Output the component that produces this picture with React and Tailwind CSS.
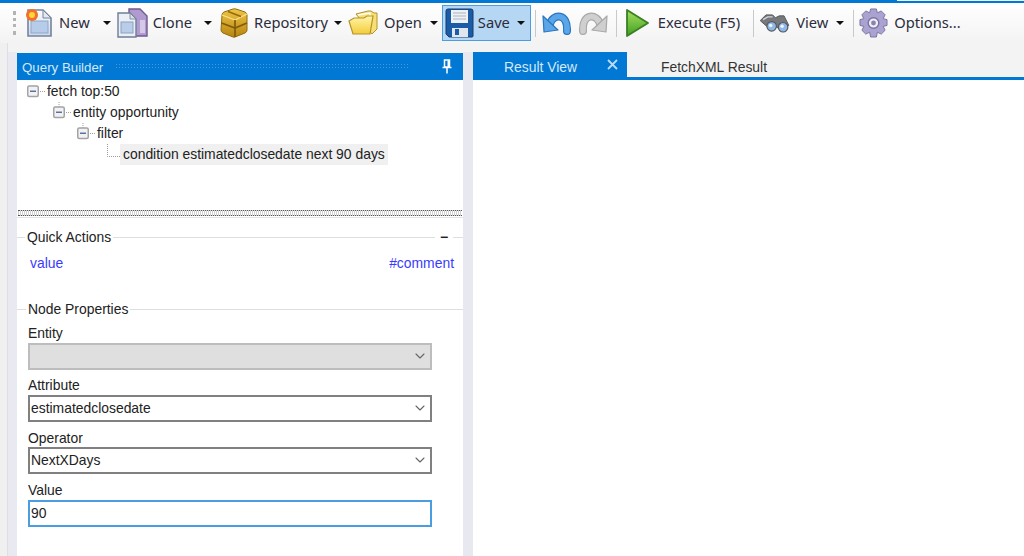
import { ChevronDown } from "lucide-react";

const IconNew = () => (
  <svg width="28" height="30" viewBox="0 0 28 30">
    <defs>
      <linearGradient id="newPage" x1="0" y1="0" x2="0" y2="1">
        <stop offset="0" stopColor="#fbfcfe" />
        <stop offset="1" stopColor="#cbd9ec" />
      </linearGradient>
    </defs>
    <path d="M3 2h15l8 8v18H3z" fill="url(#newPage)" stroke="#75849a" strokeWidth="1.6" />
    <path d="M18 2v8h8z" fill="#e4e9f0" stroke="#75849a" strokeWidth="1" />
    <rect x="6" y="13" width="17" height="12" fill="#b6cce9" stroke="#8ea6c8" strokeWidth="1" />
    <circle cx="7" cy="7" r="6" fill="#f2702a" />
    <circle cx="7" cy="7" r="3" fill="#ffd53c" />
  </svg>
);

const IconClone = () => (
  <svg width="31" height="30" viewBox="0 0 31 30">
    <path d="M12 1h11l7 7v20H12z" fill="#b09ad0" stroke="#6f5b8c" strokeWidth="1.4" />
    <rect x="23" y="12" width="5" height="13" fill="#d5c8e8" />
    <path d="M1 5h12l6 6v18H1z" fill="#eaeff6" stroke="#6f7d96" strokeWidth="1.4" />
    <path d="M13 5v6h6z" fill="#d8dee7" stroke="#6f7d96" strokeWidth="0.8" />
    <rect x="4" y="14" width="12" height="11" fill="#b9cde8" stroke="#8ba1c1" strokeWidth="1" />
  </svg>
);

const IconBox = () => (
  <svg width="28" height="30" viewBox="0 0 28 30">
    <defs>
      <linearGradient id="boxSide" x1="0" y1="0" x2="0" y2="1">
        <stop offset="0" stopColor="#f0c445" />
        <stop offset="1" stopColor="#b8850f" />
      </linearGradient>
    </defs>
    <path d="M2 7Q2 5 4 4L13 1Q14 .6 16 1L25 4Q27 5 27 7L27 22Q27 24 25 25L15 29Q14 29.4 13 29L3 25Q1 24 1 22z" fill="url(#boxSide)" stroke="#8f6c0e" strokeWidth="1" />
    <path d="M2 7l13 5 12-6" fill="none" stroke="#f9e08e" strokeWidth="1.3" />
    <path d="M15 12v17" stroke="#7d5d0c" strokeWidth="1.7" />
    <path d="M1.5 15l13.5 5 12-5" fill="none" stroke="#7d5d0c" strokeWidth="1.7" />
    <path d="M8 3.5l13 5" fill="none" stroke="#8f6c0e" strokeWidth="1.5" />
  </svg>
);

const IconFolder = () => (
  <svg width="30" height="26" viewBox="0 0 30 26">
    <defs>
      <linearGradient id="folderFill" x1="0" y1="0" x2="0" y2="1">
        <stop offset="0" stopColor="#fff5a8" />
        <stop offset="1" stopColor="#f4cc3c" />
      </linearGradient>
    </defs>
    <path d="M8 4 20 1h3l3 2h3v16l-5 5z" fill="#f7df74" stroke="#b5932c" strokeWidth="1" />
    <path d="M10 5l12-2v10" fill="none" stroke="#fff" strokeWidth="1.4" />
    <path d="M1 11l5-3h10l3-2h6l-3 18H5z" fill="url(#folderFill)" stroke="#b5932c" strokeWidth="1.2" />
  </svg>
);

const IconSave = () => (
  <svg width="29" height="30" viewBox="0 0 29 30">
    <path d="M1 3a2 2 0 0 1 2-2h23a2 2 0 0 1 2 2v25a1 1 0 0 1-1 1H4l-3-3z" fill="#1c5ba6" stroke="#123c75" strokeWidth="1" />
    <rect x="6" y="2" width="17" height="13" fill="#eef1f4" />
    <path d="M8 5h13M8 8h13M8 11h13" stroke="#a9b4c1" strokeWidth="1" />
    <rect x="7" y="20" width="16" height="9" fill="#dfe6ee" />
    <rect x="10" y="21" width="4" height="6" fill="#1c5ba6" />
  </svg>
);

const IconArrow = ({ flip, fill, stroke }) => (
  <svg width="30" height="24" viewBox="0 0 30 24" className={flip ? "-scale-x-100" : ""}>
    <path d="M8 13C11 2 26 2 25 20" fill="none" stroke={stroke} strokeWidth="8" strokeLinecap="round" />
    <path d="M8 13C11 2 26 2 25 20" fill="none" stroke={fill} strokeWidth="5.6" strokeLinecap="round" />
    <path d="M1 5 2 21l14-2z" fill={fill} stroke={stroke} strokeWidth="1.2" strokeLinejoin="round" />
  </svg>
);

const IconPlay = () => (
  <svg width="25" height="30" viewBox="0 0 25 30">
    <defs>
      <linearGradient id="playFill" x1="0" y1="0" x2="0" y2="1">
        <stop offset="0" stopColor="#a8e05f" />
        <stop offset="1" stopColor="#3f9e22" />
      </linearGradient>
    </defs>
    <path d="M2 2 23 15 2 28z" fill="url(#playFill)" stroke="#3b7f24" strokeWidth="1.8" strokeLinejoin="round" />
  </svg>
);

const IconBinoculars = () => (
  <svg width="31" height="20" viewBox="0 0 32 21">
    <path d="M1 8 7 2h7l3 3 4-2h5l5 10-7 6-8-6-7 2z" fill="#77787c" stroke="#55565a" strokeWidth="1" />
    <path d="M4 7l5-3h5" fill="none" stroke="#d4d5d8" strokeWidth="1.4" />
    <circle cx="13" cy="14" r="5" fill="#8db8e8" stroke="#55565a" strokeWidth="1.2" />
    <circle cx="25" cy="15" r="5" fill="#8db8e8" stroke="#55565a" strokeWidth="1.2" />
    <circle cx="12" cy="13" r="1.8" fill="#eef5fc" />
    <circle cx="24" cy="14" r="1.8" fill="#eef5fc" />
  </svg>
);

const IconGear = () => (
  <svg width="29" height="30" viewBox="0 0 30 31">
    <path
      d="M12 1h6l1 4 4-2 4 4-2 4 4 1v6l-4 1 2 4-4 4-4-2-1 5h-6l-1-5-4 2-4-4 2-4-4-1v-6l4-1-2-4 4-4 4 2z"
      fill="#aaa3d2"
      stroke="#7a739f"
      strokeWidth="1"
      strokeLinejoin="round"
    />
    <circle cx="15" cy="15.5" r="5.5" fill="#f0eff6" stroke="#7a739f" strokeWidth="1.5" />
    <circle cx="15" cy="15.5" r="2.5" fill="#8a83b2" />
  </svg>
);

const Caret = ({ className = "" }) => (
  <span className={`w-0 h-0 border-x-[4px] border-x-transparent border-t-[4px] border-t-[#111] ${className}`} />
);

const Sep = ({ className = "" }) => <div className={`w-[1px] h-[27px] bg-[#c9c9c9] ${className}`} />;

const ToolItem = ({ icon, label, labelClass, caret, className = "" }) => (
  <div className={`flex items-center ${className}`}>
    {icon}
    <span className={`-mt-[2px] ${labelClass}`}>{label}</span>
    {caret}
  </div>
);

const Expander = ({ top }) => (
  <svg width="20" height="21" viewBox="0 0 20 21" className="shrink-0">
    {top && <path d="M6 0v5" stroke="#a0a0a0" strokeDasharray="1 1" />}
    <rect x="0.75" y="5" width="10.5" height="10.5" rx="1.5" fill="#f2f2f2" stroke="#a3a3a3" strokeWidth="1.5" />
    <path d="M3 10.25h6" stroke="#5468a0" strokeWidth="1.4" />
    <path d="M13 10.5h6" stroke="#a0a0a0" strokeDasharray="1 1" />
  </svg>
);

const TreeRow = ({ pad, text, top }) => (
  <div className={`flex items-center h-[21px] ${pad}`}>
    <Expander top={top} />
    <span>{text}</span>
  </div>
);

const FieldLabel = ({ children }) => (
  <div className="h-[15px] leading-[15px]">{children}</div>
);

const SelectBox = ({ value, disabled }) => (
  <div
    className={`h-[27px] flex items-center justify-between pl-[1px] pr-[2px] border-[2px] ${
      disabled ? "bg-[#dfdfdf] border-[#bdbdbd]" : "bg-white border-[#808080]"
    }`}
  >
    <span>{value}</span>
    <ChevronDown size={16} color="#666" strokeWidth={1.6} />
  </div>
);

export default function App() {
  return (
    <div className="w-[1024px] h-[556px] overflow-hidden flex flex-col bg-white text-[13.9px] text-[#222] font-['Liberation_Sans',sans-serif]">
      {/* Toolbar */}
      <div className="h-[3px] shrink-0 flex">
        <div className="w-[897px] bg-[#0078d4]" />
        <div className="flex-1 bg-[#eaf3fb] border-b-[2px] border-[#0078d4]" />
      </div>
      <div className="h-[40px] shrink-0 flex items-center pl-[13px] bg-gradient-to-b from-[#ffffff] to-[#f3f3f3] font-['Noto_Sans',sans-serif] text-[14.7px] text-[#2c2c3c]">
        <div className="w-[3px] h-[24px] mr-[9px] border-l-[3px] border-dotted border-[#b4b4b4]" />
        <ToolItem icon={<IconNew />} label="New" labelClass="ml-[6px]" caret={<Caret className="ml-[13px]" />} />
        <ToolItem icon={<IconClone />} label="Clone" labelClass="ml-[5px]" caret={<Caret className="ml-[12px]" />} className="ml-[6px]" />
        <ToolItem icon={<IconBox />} label="Repository" labelClass="ml-[6px]" caret={<Caret className="ml-[6px]" />} className="ml-[8px]" />
        <ToolItem icon={<IconFolder />} label="Open" labelClass="ml-[6px]" caret={<Caret className="ml-[8px]" />} className="ml-[6px]" />
        <div className="ml-[4px] h-[36px] w-[89px] flex items-center pl-[2px] bg-[#b5d7f3] border border-[#4a9de0]">
          <IconSave />
          <span className="-mt-[2px] ml-[4px]">Save</span>
          <Caret className="ml-[7px]" />
        </div>
        <Sep className="ml-[4px]" />
        <div className="ml-[6px]"><IconArrow fill="#5aa6e8" stroke="#2a76c0" /></div>
        <div className="ml-[6px]"><IconArrow flip fill="#cfcfcf" stroke="#a9a9a9" /></div>
        <Sep className="ml-[8px]" />
        <ToolItem icon={<IconPlay />} label="Execute (F5)" labelClass="ml-[8px]" className="ml-[8px]" />
        <Sep className="ml-[13px]" />
        <ToolItem icon={<IconBinoculars />} label="View" labelClass="ml-[6px]" caret={<Caret className="ml-[8px]" />} className="ml-[5px]" />
        <Sep className="ml-[9px]" />
        <ToolItem icon={<IconGear />} label="Options..." labelClass="ml-[6px]" className="ml-[5px]" />
      </div>

      {/* Main */}
      <div className="flex-1 flex min-h-0 bg-[#f3f3f3]">
        <div className="w-[8px] bg-[#f0f0f0] border-r border-[#dedee6]" />
        <div className="w-[9px] mt-[9px] bg-[#e9e9f1]" />

        {/* Query builder panel */}
        <div className="w-[446px] mt-[10px] flex flex-col bg-white">
          <div className="h-[27px] shrink-0 bg-[#0078d4] flex items-center pl-[5px] pr-[11px] text-[#d3e8f8] text-[13.3px]">
            <span className="w-[90px] shrink-0 pt-[2px]">Query Builder</span>
            <div className="flex-1 h-[7px] ml-[3px] mr-[33px] bg-[radial-gradient(#3d9ae2_1px,transparent_1px)] bg-[length:3px_3px]" />
            <svg width="10" height="15" viewBox="0 0 10 15">
              <path d="M2.5 1h5v7h-5zM0.5 8.5h9M5 8.5v6" fill="none" stroke="#fff" strokeWidth="1.5" />
              <path d="M5.5 1.5h1.5v6.5h-1.5z" fill="#fff" />
            </svg>
          </div>

          {/* Tree */}
          <div className="h-[130px] shrink-0 pt-[1px]">
            <TreeRow pad="pl-[10px]" text="fetch top:50" />
            <TreeRow pad="pl-[36px]" text="entity opportunity" top />
            <TreeRow pad="pl-[60px]" text="filter" top />
            <div className="flex items-center h-[21px] pl-[90px]">
              <svg width="13" height="21" viewBox="0 0 13 21" className="shrink-0">
                <path d="M.5 0v12.5h12.5" fill="none" stroke="#9a9a9a" strokeDasharray="1 1" />
              </svg>
              <span className="bg-[#f0f0f0] px-[3px] h-[21px] leading-[21px]">condition estimatedclosedate next 90 days</span>
            </div>
          </div>

          {/* Splitter */}
          <div className="h-[6px] shrink-0 mx-[1px] border-y border-dotted border-[#555] bg-[repeating-linear-gradient(90deg,#cfcfcf_0_1px,#fff_1px_2px)]" />
          <div className="h-[1px] shrink-0 mt-[1px] bg-[#e3e3e3]" />

          {/* Quick actions */}
          <div className="mt-[11px] flex items-center h-[16px]">
            <div className="w-[8px] h-[1px] bg-[#dedede]" />
            <span className="px-[2px]">Quick Actions</span>
            <div className="flex-1 h-[1px] bg-[#dedede]" />
            <span className="px-[5px] font-bold">−</span>
            <div className="w-[10px] h-[1px] bg-[#dedede]" />
          </div>
          <div className="mt-[8px] flex justify-between pl-[13px] pr-[9px] text-[#3a3aff]">
            <span>value</span>
            <span>#comment</span>
          </div>

          {/* Node properties */}
          <div className="mt-[28px] flex items-center h-[16px]">
            <div className="w-[9px] h-[1px] bg-[#dedede]" />
            <span className="px-[2px]">Node Properties</span>
            <div className="flex-1 h-[1px] bg-[#dedede]" />
          </div>
          <div className="pl-[11px] pr-[31px] mt-[8px] flex flex-col">
            <FieldLabel>Entity</FieldLabel>
            <div className="mt-[2px]"><SelectBox disabled /></div>
            <div className="mt-[8px]"><FieldLabel>Attribute</FieldLabel></div>
            <div className="mt-[2px]"><SelectBox value="estimatedclosedate" /></div>
            <div className="mt-[9px]"><FieldLabel>Operator</FieldLabel></div>
            <div className="mt-[1px]"><SelectBox value="NextXDays" /></div>
            <div className="mt-[9px]"><FieldLabel>Value</FieldLabel></div>
            <div className="mt-[2px] h-[27px] flex items-center pl-[1px] border-[2px] border-[#4a9de0]">90</div>
          </div>
        </div>

        <div className="w-[10px] mt-[9px] bg-[#e8e8f0]" />

        {/* Results */}
        <div className="flex-1 mt-[9px] flex flex-col">
          <div className="h-[25px] shrink-0 flex items-center">
            <div className="w-[154px] h-full bg-[#0078d4] flex items-center pl-[31px] pr-[9px] justify-between text-[#d3e8f8]">
              <span className="pt-[6px]">Result View</span>
              <svg width="11" height="11" viewBox="0 0 11 11">
                <path d="M1 1l9 9M10 1l-9 9" stroke="#bcdcf5" strokeWidth="1.8" />
              </svg>
            </div>
            <span className="ml-[34px] pt-[6px] text-[#333]">FetchXML Result</span>
          </div>
          <div className="h-[3px] shrink-0 bg-[#0078d4]" />
          <div className="flex-1 bg-white" />
        </div>
      </div>
    </div>
  );
}
